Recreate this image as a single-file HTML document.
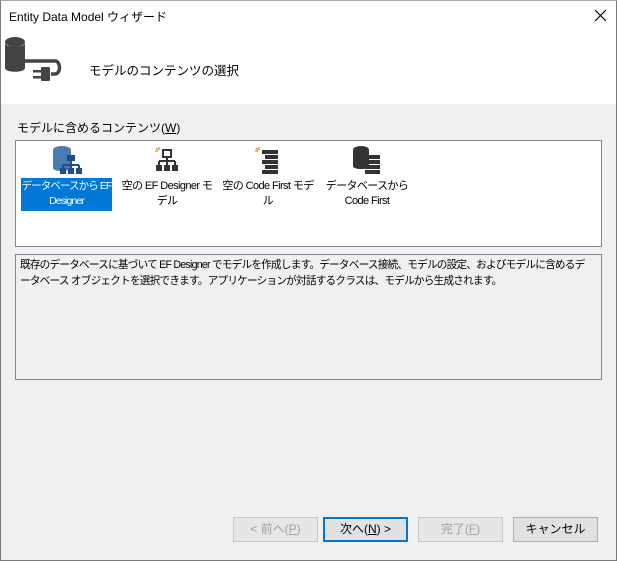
<!DOCTYPE html>
<html><head><meta charset="utf-8"><style>
*{margin:0;padding:0;box-sizing:border-box}
body{width:617px;height:561px;overflow:hidden;font-family:"Liberation Sans","Noto Sans CJK JP",sans-serif;font-size:12px;color:#000;position:relative;background:#f0f0f0}
.win{position:absolute;left:0;top:0;width:617px;height:561px;border:1px solid #7a7a7a;border-top:1px solid #aaa}
.hdr{position:absolute;left:1px;top:1px;width:615px;height:103px;background:#fff}
.abs{position:absolute;white-space:nowrap}
.list{position:absolute;left:15px;top:140px;width:587px;height:107px;background:#fff;border:1px solid #828790}
.desc{position:absolute;left:15px;top:254px;width:587px;height:126px;border:1px solid #828790;background:#f0f0f0;padding:2px 4px;line-height:16px;font-size:10.6px;letter-spacing:-0.75px;white-space:nowrap;overflow:hidden}
.btn{position:absolute;top:517px;width:85px;height:25px;border:1px solid #adadad;background:#e1e1e1;text-align:center;line-height:22px;font-size:12px}
.dis{color:#a0a0a0;border-color:#c8c8c8;background:#e6e6e6}
.item{position:absolute;top:178px;text-align:center;font-size:11px;line-height:15px;white-space:nowrap;letter-spacing:-0.6px}
</style></head><body>
<div class="win"></div>
<div class="hdr"></div>
<div class="abs" style="left:9px;top:8px;font-size:12px">Entity Data Model ウィザード</div>
<svg class="abs" style="left:594px;top:9px" width="13" height="13"><path d="M1 1L12 12M12 1L1 12" stroke="#000" stroke-width="1.2"/></svg>
<svg class="abs" style="left:3px;top:36px" width="62" height="52">
<ellipse cx="12" cy="6" rx="10" ry="5" fill="#444"/>
<path d="M2 7v25c0 5 20 5 20 0V7c0 5-20 5-20 0z" fill="#444"/>
<path d="M22 25h30c6 0 6 13 0 13h-4" stroke="#444" stroke-width="3.5" fill="none"/>
<rect x="38" y="31" width="9" height="14" rx="1" fill="#444"/>
<rect x="30" y="34" width="8" height="2.5" fill="#444"/><rect x="30" y="40" width="8" height="2.5" fill="#444"/>
</svg>
<div class="abs" style="left:89px;top:60px;font-size:12.5px">モデルのコンテンツの選択</div>
<div class="abs" style="left:17px;top:119px;font-size:12px">モデルに含めるコンテンツ(<u>W</u>)</div>
<div class="list"></div>
<svg class="abs" style="left:51px;top:145px" width="34" height="32">
<ellipse cx="11" cy="5" rx="9" ry="4" fill="#4a7bb5"/><path d="M2 5v18c0 4 18 4 18 0V5c0 4-18 4-18 0z" fill="#4a7bb5"/>
<rect x="16" y="10" width="8" height="6" fill="#1e4f8a"/><path d="M20 16v4M12 20h16M12 20v3M20 20v3M28 20v3" stroke="#1e4f8a" stroke-width="2"/>
<rect x="9" y="23" width="6" height="6" fill="#1e4f8a"/><rect x="17" y="23" width="6" height="6" fill="#1e4f8a"/><rect x="25" y="23" width="6" height="6" fill="#1e4f8a"/>
</svg>
<svg class="abs" style="left:153px;top:145px" width="30" height="30">
<path d="M6 2v3M2 6h3M3 3l2 2" stroke="#e8a030" stroke-width="1.5"/>
<rect x="10" y="5" width="8" height="7" fill="none" stroke="#333" stroke-width="2"/>
<path d="M14 12v4M6 16h16M6 16v4M14 16v4M22 16v4" stroke="#333" stroke-width="2"/>
<rect x="3" y="20" width="6" height="6" fill="#333"/><rect x="11" y="20" width="6" height="6" fill="#333"/><rect x="19" y="20" width="6" height="6" fill="#333"/>
</svg>
<svg class="abs" style="left:253px;top:145px" width="30" height="32">
<path d="M6 2v3M2 6h3M3 3l2 2" stroke="#e8a030" stroke-width="1.5"/>
<rect x="9" y="5" width="16" height="4" fill="#333"/><rect x="12" y="10" width="13" height="4" fill="#333"/><rect x="9" y="15" width="16" height="4" fill="#333"/><rect x="12" y="20" width="13" height="4" fill="#333"/><rect x="9" y="25" width="16" height="4" fill="#333"/>
</svg>
<svg class="abs" style="left:351px;top:145px" width="34" height="32">
<ellipse cx="10" cy="5" rx="8" ry="4" fill="#333"/><path d="M2 5v16c0 4 16 4 16 0V5c0 4-16 4-16 0z" fill="#333"/>
<rect x="14" y="10" width="15" height="4" fill="#333"/><rect x="17" y="15" width="12" height="4" fill="#333"/><rect x="14" y="20" width="15" height="4" fill="#333"/><rect x="14" y="25" width="15" height="4" fill="#333"/>
</svg>
<div class="item" style="left:21px;width:91px;height:33px;background:#0078d7;color:#fff;padding-top:1px;font-size:10.5px;letter-spacing:-0.9px">データベースから EF<br>Designer</div>
<div class="item" style="left:116px;width:102px;padding-top:1px">空の EF Designer モ<br>デル</div>
<div class="item" style="left:216px;width:104px;padding-top:1px">空の Code First モデ<br>ル</div>
<div class="item" style="left:320px;width:94px;padding-top:1px">データベースから<br>Code First</div>
<div class="desc">既存のデータベースに基づいて EF Designer でモデルを作成します。データベース接続、モデルの設定、およびモデルに含めるデ<br>ータベース オブジェクトを選択できます。アプリケーションが対話するクラスは、モデルから生成されます。</div>
<div class="btn dis" style="left:233px">&lt; 前へ(<u>P</u>)</div>
<div class="btn" style="left:323px;border:2px solid #0078d7;line-height:21px">次へ(<u>N</u>) &gt;</div>
<div class="btn dis" style="left:418px">完了(<u>F</u>)</div>
<div class="btn" style="left:513px">キャンセル</div>
</body></html>
